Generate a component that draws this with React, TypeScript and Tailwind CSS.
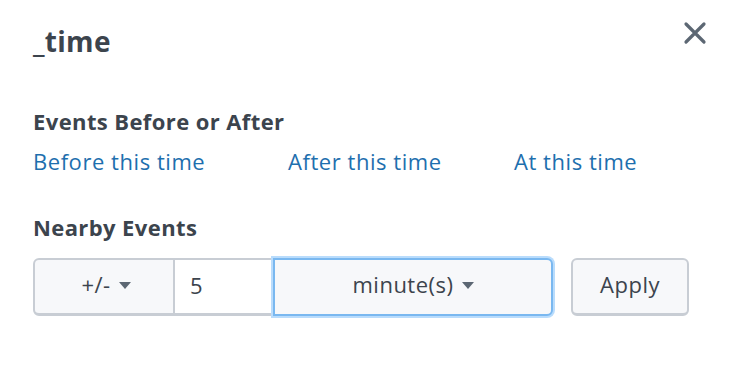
import React from 'react';

const Caret = () => (
  <svg width="12" height="7" viewBox="0 0 12 7" className="inline-block ml-[8px] mb-[3px]">
    <path d="M0 0 L12 0 L6 7 Z" fill="#5c6773" />
  </svg>
);

export default function App() {
  return (
    <div className="w-[730px] h-[384px] bg-white relative text-[#3c444d]" style={{ fontFamily: '"Open Sans", Lato, sans-serif' }}>
      <div className="px-[33px] pt-[25px]">
        <div className="flex items-start justify-between">
          <h2 className="text-[28px] leading-[32px] font-bold tracking-[0.3px]">_time</h2>
          <button className="mt-[-8px] mr-[-14px] p-1">
            <svg width="24" height="24" viewBox="0 0 24 24">
              <path d="M3 3 L21 21 M21 3 L3 21" stroke="#5c6773" strokeWidth="3.2" strokeLinecap="round" />
            </svg>
          </button>
        </div>

        <h3 className="mt-[51px] text-[22px] leading-[26px] font-bold tracking-[0.4px]">Events Before or After</h3>
        <div className="mt-[14px] flex text-[22px] leading-[26px] tracking-[0.55px] text-[#1e6fae]">
          <a className="w-[255px]">Before this time</a>
          <a className="w-[226px]">After this time</a>
          <a>At this time</a>
        </div>

        <h3 className="mt-[40px] text-[22px] leading-[26px] font-bold tracking-[0.4px]">Nearby Events</h3>
        <div className="mt-[18px] flex items-center">
          <div className="flex h-[58px]">
            <button className="w-[142px] h-full pb-[5px] pl-[4px] bg-[#f7f8fa] border-2 border-b-[3px] border-[#c8cdd4] rounded-l-[6px] text-[22px] tracking-[0.5px] text-[#3c444d]">
              +/-<Caret />
            </button>
            <input
              readOnly
              value="5"
              className="w-[98px] h-full pb-[4px] border-t-2 border-b-[3px] border-[#c8cdd4] bg-white px-[15px] text-[22px] text-[#3c444d] outline-none"
            />
            <button className="w-[280px] h-full pb-[5px] bg-[#f7f8fa] border-2 border-[#7ab8f0] rounded-r-[6px] shadow-[0_0_0_2px_#b9dcfc] text-[22px] tracking-[0.5px] text-[#3c444d]">
              minute(s)<Caret />
            </button>
          </div>
          <button className="ml-[18px] w-[118px] h-[58px] pb-[5px] bg-[#f7f8fa] border-2 border-b-[3px] border-[#c8cdd4] rounded-[6px] text-[22px] tracking-[0.5px] text-[#3c444d]">
            Apply
          </button>
        </div>
      </div>
    </div>
  );
}
